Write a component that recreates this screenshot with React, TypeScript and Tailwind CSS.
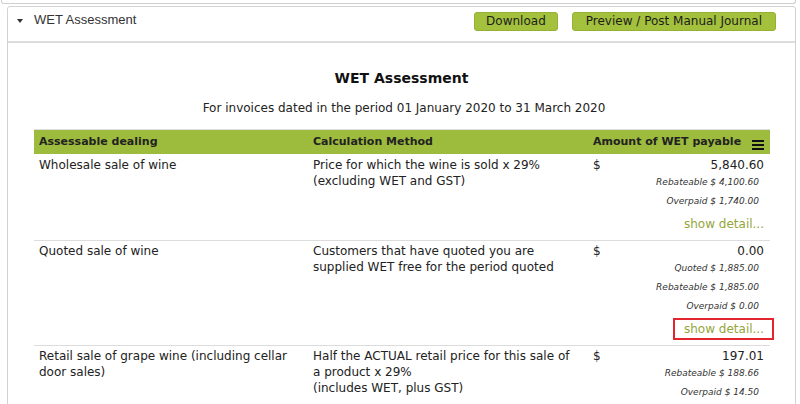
import React from "react";

const body = { fontFamily: '"DejaVu Sans", Verdana, sans-serif' };

function Italic({ children }: { children: React.ReactNode }) {
  return (
    <div className="h-[19px] leading-[19px] text-[9px] italic text-[#333] text-right pr-[5px]">
      {children}
    </div>
  );
}

function ShowDetail({ boxed }: { boxed?: boolean }) {
  return (
    <div className="h-[26px] leading-[26px] text-right text-[12px] text-[#94a53a]">
      <span className="relative">
        show detail...
        {boxed && (
          <span className="absolute left-[-11px] right-[-10px] top-1/2 -translate-y-1/2 h-[22px] border-2 border-[#e3262d]" />
        )}
      </span>
    </div>
  );
}

type Row = {
  a: React.ReactNode;
  b: React.ReactNode;
  amount: string;
  details: string[];
  boxed?: boolean;
  showDetail?: boolean;
};

const rows: Row[] = [
  {
    a: "Wholesale sale of wine",
    b: (
      <>
        Price for which the wine is sold x 29%
        <br />
        (excluding WET and GST)
      </>
    ),
    amount: "5,840.60",
    details: ["Rebateable $ 4,100.60", "Overpaid $ 1,740.00"],
    showDetail: true,
  },
  {
    a: "Quoted sale of wine",
    b: (
      <>
        Customers that have quoted you are
        <br />
        supplied WET free for the period quoted
      </>
    ),
    amount: "0.00",
    details: ["Quoted $ 1,885.00", "Rebateable $ 1,885.00", "Overpaid $ 0.00"],
    showDetail: true,
    boxed: true,
  },
  {
    a: (
      <>
        Retail sale of grape wine (including cellar
        <br />
        door sales)
      </>
    ),
    b: (
      <>
        Half the ACTUAL retail price for this sale of
        <br />
        a product x 29%
        <br />
        (includes WET, plus GST)
      </>
    ),
    amount: "197.01",
    details: ["Rebateable $ 188.66", "Overpaid $ 14.50"],
    showDetail: true,
  },
];

export default function App() {
  return (
    <div className="w-[800px] h-[404px] overflow-hidden bg-white relative" style={body}>
      {/* previous panel bottom */}
      <div className="h-[4px] ml-[1px] mr-[4px] border border-t-0 border-[#cfcfcf] rounded-b-[3px]" />
      <div className="mt-[2px] ml-[7px] mr-[4px] border border-[#d2d2d2] rounded-t-[3px] h-[500px]">
        {/* header */}
        <div className="h-[36px] flex items-start border-b-2 border-[#dcdcdc] pl-[9px] pr-[19px] pt-[5px]">
          <svg width="6" height="4" viewBox="0 0 6 4" className="mr-[11px] mt-[7px]">
            <polygon points="0,0 6,0 3,4" fill="#333" />
          </svg>
          <span
            className="text-[13px] leading-[16px] text-[#333]"
            style={{ fontFamily: '"Liberation Sans", Arial, sans-serif' }}
          >
            WET Assessment
          </span>
          <div className="flex-1" />
          <button className="h-[19px] px-[11px] text-[12px] leading-[17px] text-[#1d1d1d] bg-[#a3c13d] border border-[#95b132] rounded-[3px]">
            Download
          </button>
          <button className="ml-[14px] h-[19px] px-[13px] text-[12px] leading-[17px] text-[#1d1d1d] bg-[#a3c13d] border border-[#95b132] rounded-[3px]">
            Preview / Post Manual Journal
          </button>
        </div>
        {/* body */}
        <div className="px-[26px] pt-[25px]">
          <div className="text-center text-[14px] font-bold text-[#111] leading-[20px]">
            WET Assessment
          </div>
          <div className="text-center text-[12px] text-[#222] leading-[16px] mt-[12px] pl-[5px]">
            For invoices dated in the period 01 January 2020 to 31 March 2020
          </div>
          <div className="mt-[13px] w-[736px] border-t border-[#dedede]">
            <div className="grid grid-cols-[274px_280px_182px] h-[24px] bg-[#9dbb3c] text-[11px] font-bold text-[#222] items-center">
              <div className="pl-[5px]">Assessable dealing</div>
              <div className="pl-[5px]">Calculation Method</div>
              <div className="pl-[5px] flex items-center pr-[6px]">
                <span>Amount of WET payable</span>
                <span className="flex-1" />
                <svg width="12" height="10" viewBox="0 0 12 10" className="mt-[6px]">
                  <rect x="0" y="0" width="12" height="2" fill="#111" />
                  <rect x="0" y="4" width="12" height="2" fill="#111" />
                  <rect x="0" y="8" width="12" height="2" fill="#111" />
                </svg>
              </div>
            </div>
            {rows.map((r, i) => (
              <div
                key={i}
                className={`grid grid-cols-[274px_280px_182px] text-[12px] text-[#222] leading-[16px] ${
                  i > 0 ? "border-t border-[#dcdcdc]" : ""
                }`}
              >
                <div className={`pl-[5px] ${i > 0 ? "pt-[2px]" : "pt-[3px]"}`}>{r.a}</div>
                <div className={`pl-[5px] ${i > 0 ? "pt-[2px]" : "pt-[3px]"}`}>{r.b}</div>
                <div className={`pl-[5px] pr-[6px] pb-[3px] ${i > 0 ? "pt-[2px]" : "pt-[3px]"}`}>
                  <div className="flex justify-between h-[16px]">
                    <span>$</span>
                    <span>{r.amount}</span>
                  </div>
                  {r.details.map((d) => (
                    <Italic key={d}>{d}</Italic>
                  ))}
                  {r.showDetail && <ShowDetail boxed={r.boxed} />}
                </div>
              </div>
            ))}
          </div>
        </div>
      </div>
    </div>
  );
}
